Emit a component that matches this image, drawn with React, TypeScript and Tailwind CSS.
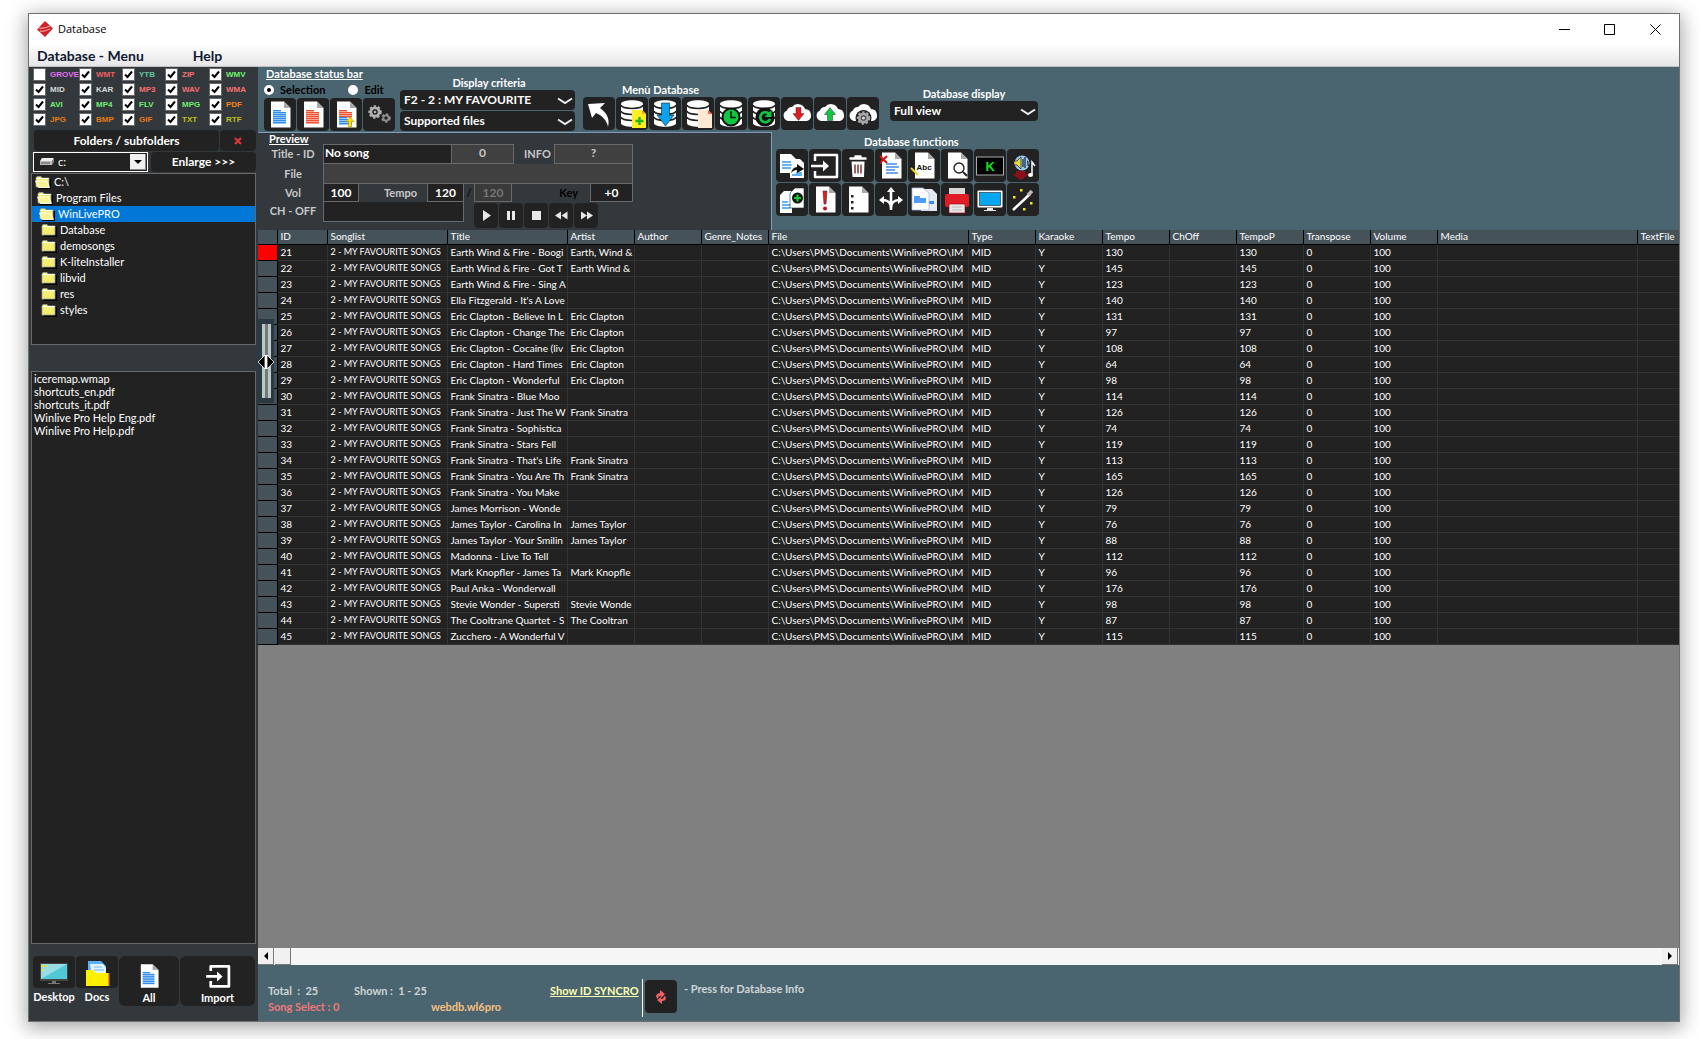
import { useState } from 'react';
import type { ReactNode } from 'react';

interface Filter {
    name: string;
    color: string;
    on?: boolean;
}

const filters: Filter[] = [
    { name: 'GROVE', color: 'text-[#e070f0]', on: false },
    { name: 'WMT', color: 'text-[#f06060]' },
    { name: 'YTB', color: 'text-[#60c8a0]' },
    { name: 'ZIP', color: 'text-[#f87070]' },
    { name: 'WMV', color: 'text-[#70f070]' },
    { name: 'MID', color: 'text-[#d8d8d8]' },
    { name: 'KAR', color: 'text-[#d8d8d8]' },
    { name: 'MP3', color: 'text-[#f87070]' },
    { name: 'WAV', color: 'text-[#f87070]' },
    { name: 'WMA', color: 'text-[#f87070]' },
    { name: 'AVI', color: 'text-[#70f070]' },
    { name: 'MP4', color: 'text-[#70f070]' },
    { name: 'FLV', color: 'text-[#70f070]' },
    { name: 'MPG', color: 'text-[#70f070]' },
    { name: 'PDF', color: 'text-[#ff8010]' },
    { name: 'JPG', color: 'text-[#e87c10]' },
    { name: 'BMP', color: 'text-[#e87c10]' },
    { name: 'GIF', color: 'text-[#e87c10]' },
    { name: 'TXT', color: 'text-[#c0c010]' },
    { name: 'RTF', color: 'text-[#c0c010]' },
];

const folders = [
    { name: 'C:\\', pad: 'pl-[3px]', open: true },
    { name: 'Program Files', pad: 'pl-[5px]', open: true },
    { name: 'WinLivePRO', pad: 'pl-[7px]', open: true },
    { name: 'Database', pad: 'pl-[9px]', open: false },
    { name: 'demosongs', pad: 'pl-[9px]', open: false },
    { name: 'K-liteInstaller', pad: 'pl-[9px]', open: false },
    { name: 'libvid', pad: 'pl-[9px]', open: false },
    { name: 'res', pad: 'pl-[9px]', open: false },
    { name: 'styles', pad: 'pl-[9px]', open: false },
];

const files = ['iceremap.wmap', 'shortcuts_en.pdf', 'shortcuts_it.pdf', 'Winlive Pro Help Eng.pdf', 'Winlive Pro Help.pdf'];

const columns = [
    { name: 'ID', width: 'w-[50px]' },
    { name: 'Songlist', width: 'w-[120px]' },
    { name: 'Title', width: 'w-[120px]' },
    { name: 'Artist', width: 'w-[67px]' },
    { name: 'Author', width: 'w-[67px]' },
    { name: 'Genre_Notes', width: 'w-[67px]' },
    { name: 'File', width: 'w-[200px]' },
    { name: 'Type', width: 'w-[67px]' },
    { name: 'Karaoke', width: 'w-[67px]' },
    { name: 'Tempo', width: 'w-[67px]' },
    { name: 'ChOff', width: 'w-[67px]' },
    { name: 'TempoP', width: 'w-[67px]' },
    { name: 'Transpose', width: 'w-[67px]' },
    { name: 'Volume', width: 'w-[67px]' },
    { name: 'Media', width: 'w-[200px]' },
    { name: 'TextFile', width: '' },
];

// title, artist, tempo
const songs: [string, string, number][] = [
    ['Earth Wind & Fire - Boogi', 'Earth, Wind &', 130],
    ['Earth Wind & Fire - Got T', 'Earth Wind &', 145],
    ['Earth Wind & Fire - Sing A', '', 123],
    ["Ella Fitzgerald - It's A Love", '', 140],
    ['Eric Clapton - Believe In L', 'Eric Clapton', 131],
    ['Eric Clapton - Change The', 'Eric Clapton', 97],
    ['Eric Clapton - Cocaine (liv', 'Eric Clapton', 108],
    ['Eric Clapton - Hard Times', 'Eric Clapton', 64],
    ['Eric Clapton - Wonderful', 'Eric Clapton', 98],
    ['Frank Sinatra - Blue Moo', '', 114],
    ['Frank Sinatra - Just The W', 'Frank Sinatra', 126],
    ['Frank Sinatra - Sophistica', '', 74],
    ['Frank Sinatra - Stars Fell', '', 119],
    ["Frank Sinatra - That's Life", 'Frank Sinatra', 113],
    ['Frank Sinatra - You Are Th', 'Frank Sinatra', 165],
    ['Frank Sinatra - You Make', '', 126],
    ['James Morrison - Wonde', '', 79],
    ['James Taylor - Carolina In', 'James Taylor', 76],
    ['James Taylor - Your Smilin', 'James Taylor', 88],
    ['Madonna - Live To Tell', '', 112],
    ['Mark Knopfler - James Ta', 'Mark Knopfle', 96],
    ['Paul Anka - Wonderwall', '', 176],
    ['Stevie Wonder - Supersti', 'Stevie Wonde', 98],
    ['The Cooltrane Quartet - S', 'The Cooltran', 87],
    ['Zucchero - A Wonderful V', '', 115],
];

const rows = songs.map(([title, artist, tempo], i) => [
    String(21 + i), '2 - MY FAVOURITE SONGS', title, artist, '', '',
    'C:\\Users\\PMS\\Documents\\WinlivePRO\\IM', 'MID', 'Y', String(tempo), '', String(tempo), '0', '100', '', '',
]);

/* ---------- icon parts ---------- */

function Svg({ children }: { children: ReactNode }) {
    return <svg viewBox="0 0 32 33" className="h-full w-full" aria-hidden="true">{children}</svg>;
}

function Page({ fold = '#a8a8a8' }: { fold?: string }) {
    return (
        <>
            <path d="M7 3.5h13l6.5 6.5v19.500H7z" fill="#fff" />
            <path d="M20 3.500l6.500 6.500H20z" fill={fold} />
        </>
    );
}

function Lines({ color, from = 12, to = 24 }: { color: string; from?: number; to?: number }) {
    const ys = [];
    for (let y = from; y <= to; y += 2) ys.push(y);
    return (
        <>
            {ys.map((y, i) => (
                <rect key={y} x="9" y={y} width={i === 0 ? 8 : 13} height="1.500" fill={color} />
            ))}
        </>
    );
}

function Cylinder() {
    return (
        <>
            <path d="M5 7c0-5 22-5 22 0v19c0 5-22 5-22 0z" fill="#fff" />
            <path d="M5 8c1 4.500 21 4.500 22 0M5 14c1 4.500 21 4.500 22 0M5 20c1 4.500 21 4.500 22 0" fill="none" stroke="#222" strokeWidth="1.500" />
        </>
    );
}

function Cloud() {
    return <path d="M7 24a5.500 5.500 0 0 1-1-10.500 5 5 0 0 1 5-3.500 7.500 7.500 0 0 1 13 2 6.200 6.200 0 0 1 2 12z" fill="#fff" />;
}

function Gear({ cx, cy, r, fill, hole }: { cx: number; cy: number; r: number; fill: string; hole: string }) {
    return (
        <>
            <circle cx={cx} cy={cy} r={r} fill={fill} />
            <circle cx={cx} cy={cy} r={r} fill="none" stroke={fill} strokeWidth="2.500" strokeDasharray="2.200 1.800" />
            <circle cx={cx} cy={cy} r={r * 0.5} fill={hole} />
        </>
    );
}

const GearsIcon = () => (
    <Svg>
        <Gear cx={12} cy={14} r={5.5} fill="#b0b0b0" hole="#222" />
        <circle cx="12" cy="14" r="1.300" fill="#b0b0b0" />
        <Gear cx={23} cy={20} r={3.5} fill="#909090" hole="#222" />
    </Svg>
);

const statusIcons: { label: string; icon: ReactNode }[] = [
    { label: 'Song list', icon: <Svg><Page /><Lines color="#2f8cf0" /></Svg> },
    { label: 'Files', icon: <Svg><Page /><Lines color="#f05030" /></Svg> },
    {
        label: 'Move up',
        icon: (
            <Svg>
                <Page /><Lines color="#f05030" to={18} /><Lines color="#2f8cf0" from={19} to={25} />
                <path d="M20 19l4 4.500h-2.500V29h-3v-5.500H16z" fill="#ffe000" stroke="#a08000" strokeWidth=".5" />
            </Svg>
        ),
    },
    { label: 'Settings', icon: <GearsIcon /> },
];

const menuIcons: { label: string; icon: ReactNode }[] = [
    { label: 'Back', icon: <Svg><path d="M5 7l17-1-5 5c7 5 10 11 8 19-1-6-5-11-12-14l-4 5z" fill="#fff" /></Svg> },
    {
        label: 'New database',
        icon: (
            <Svg>
                <Cylinder /><path d="M16 13h10l4 4v14H16z" fill="#ffee22" /><path d="M26 13l4 4h-4z" fill="#f0b020" />
                <path d="M19.500 24h8M23.500 20v8" stroke="#22b822" strokeWidth="2.500" />
            </Svg>
        ),
    },
    { label: 'Load database', icon: <Svg><Cylinder /><path d="M12.500 6h8v12h4.500L16.500 29 8 18h4.500z" fill="#0aa2f2" stroke="#222" strokeWidth=".6" /></Svg> },
    { label: 'Copy database', icon: <Svg><Cylinder /><path d="M16 13h10l4 4v14H16z" fill="#ffe8d4" /><path d="M26 13l4 4h-4z" fill="#ff6050" /></Svg> },
    {
        label: 'Database history',
        icon: <Svg><Cylinder /><circle cx="16" cy="20" r="8.500" fill="#10c840" stroke="#111" strokeWidth="2" /><path d="M16 14v6.500h5" fill="none" stroke="#111" strokeWidth="1.600" /></Svg>,
    },
    {
        label: 'Restore database',
        icon: <Svg><Cylinder /><circle cx="17" cy="20" r="9.500" fill="#111" /><path d="M21.500 17.500a5 5 0 1 0 .5 4.500" fill="none" stroke="#10c840" strokeWidth="2.600" /><path d="M23.500 13v7h-7z" fill="#10c840" /></Svg>,
    },
    { label: 'Cloud download', icon: <Svg><Cloud /><path d="M15 10.500h5v6h3l-5.500 7-5.500-7h3z" fill="#e01c24" stroke="#333" strokeWidth=".5" /></Svg> },
    { label: 'Cloud upload', icon: <Svg><Cloud /><path d="M13.500 23.500h5v-6h3L16 10.500l-5.500 7h3z" fill="#10c840" stroke="#333" strokeWidth=".5" /></Svg> },
    { label: 'Cloud settings', icon: <Svg><Cloud /><circle cx="16.500" cy="21" r="8" fill="#222" /><Gear cx={16.5} cy={21} r={5.5} fill="#a8a8a8" hole="#444" /><circle cx="16.500" cy="21" r="1.600" fill="#ddd" /></Svg> },
];

const functionIcons: { label: string; icon: ReactNode }[] = [
    {
        label: 'Copy to',
        icon: (
            <Svg>
                <path d="M4 5h11l5 5v14H4z" fill="#fff" /><path d="M6 13h9M6 16h11M6 19h11" stroke="#2f9cf0" strokeWidth="1.300" />
                <path d="M17 10h7l4 4v15H14v-6z" fill="#fff" /><path d="M20 24h6M16 26h10" stroke="#2f9cf0" strokeWidth="1.300" />
                <path d="M15 24c1-4 3-6 6-6v-3l7 5-7 4v-3c-3 0-4 1-6 3z" fill="#111" />
            </Svg>
        ),
    },
    { label: 'Import song', icon: <Svg><path d="M6 12V6h22v22H6v-6M2 17h15" fill="none" stroke="#fff" strokeWidth="2.500" strokeLinejoin="round" /><path d="M14 11.500l6 5.500-6 5.500z" fill="#fff" /></Svg> },
    {
        label: 'Delete',
        icon: (
            <Svg>
                <path d="M8.500 9.500h15M13.500 7.500h5" stroke="#fff" strokeWidth="2.500" strokeLinecap="round" /><path d="M9.500 12.500h13L22 28H10.500z" fill="#fff" />
                <path d="M13 15.500v9M16 15.500v9M19 15.500v9" stroke="#600" strokeWidth="1.200" />
            </Svg>
        ),
    },
    { label: 'Remove from list', icon: <Svg><Page /><path d="M11 15h11M11 18h13M11 21h9M11 24h12" stroke="#3f8cf0" strokeWidth="1.300" /><path d="M5 7l7 7M12 7l-7 7" stroke="#e01010" strokeWidth="2" /></Svg> },
    {
        label: 'Rename',
        icon: (
            <Svg>
                <Page /><text x="8.500" y="21" fontSize="8" fontWeight="700" fontFamily="Liberation Sans, sans-serif" fill="#111">Abc</text>
                <path d="M3 19l7 7" stroke="#e8d820" strokeWidth="2" />
            </Svg>
        ),
    },
    { label: 'Search', icon: <Svg><Page /><circle cx="18" cy="19" r="5" fill="#fff" stroke="#222" strokeWidth="1.400" /><path d="M22 23l4 4" stroke="#222" strokeWidth="2" /></Svg> },
    {
        label: 'Karaoke',
        icon: (
            <Svg>
                <rect x="2.500" y="8" width="27" height="18" fill="#000" stroke="#aaa" />
                <text x="11.500" y="22" fontSize="13" fontWeight="700" fontFamily="Liberation Sans, sans-serif" fill="#10e020">K</text>
            </Svg>
        ),
    },
    {
        label: 'Audio',
        icon: (
            <Svg>
                <path d="M9 22h9v3h4l-8 6-9-6h4z" fill="#8c1018" /><circle cx="15" cy="14" r="7.500" fill="#9cc8f0" />
                <path d="M7 12h3l4-4v12l-4-4H7z" fill="#e8d840" stroke="#222" strokeWidth=".7" /><path d="M16 10v8M18 8v11M20 12c2 0 0 6 2 4" stroke="#123" fill="none" strokeWidth="1.200" />
                <path d="M25 26V13l3 4" stroke="#fff" fill="none" strokeWidth="1.500" /><ellipse cx="23.500" cy="26" rx="2.500" ry="2" fill="#fff" />
            </Svg>
        ),
    },
    {
        label: 'Add copy',
        icon: (
            <Svg>
                <path d="M4 12l4-4h8v22H4z" fill="#fff" /><path d="M6 19h6M6 22h8M6 25h8" stroke="#2f9cf0" strokeWidth="1.300" />
                <path d="M14 10l5-5h9v20H14z" fill="#fff" stroke="#222" strokeWidth=".6" /><circle cx="21.500" cy="15" r="5.500" fill="#111" />
                <path d="M18 15h7M21.500 11.500v7" stroke="#10d030" strokeWidth="2.200" />
            </Svg>
        ),
    },
    { label: 'Warnings', icon: <Svg><Page /><path d="M14 8h4l-1 13h-2z" fill="#e01c24" stroke="#333" strokeWidth=".6" /><circle cx="16" cy="25.500" r="2" fill="#c01018" /></Svg> },
    { label: 'Options', icon: <Svg><Page /><path d="M9 12h2.500v2.500H9zM9 18h2.500v2.500H9zM9 24h2.500v2.500H9z" fill="#222" /></Svg> },
    {
        label: 'Distribute',
        icon: (
            <Svg>
                <path d="M16 27V9M16 25c0-5-3-8-8-8M16 25c0-5 3-8 8-8" fill="none" stroke="#fff" strokeWidth="2.600" />
                <path d="M12 9l4-5 4 5zM9 13v8l-5-4zM23 13v8l5-4z" fill="#fff" />
            </Svg>
        ),
    },
    {
        label: 'Duplicate',
        icon: (
            <Svg>
                <path d="M13 6h11l5 5v17H13z" fill="#e4eaf4" /><path d="M21 18h5v3h-5z" fill="#2f8cf0" />
                <path d="M4 5h11l6 5v17H4z" fill="#fff" stroke="#aabbdd" strokeWidth=".8" /><path d="M6 13h6v2h6v5H6z" fill="#4f9cf8" />
            </Svg>
        ),
    },
    {
        label: 'Print',
        icon: (
            <Svg>
                <rect x="8" y="5" width="16" height="8" fill="#d8d8d8" /><rect x="4" y="11" width="24" height="13" rx="2" fill="#e01c24" />
                <rect x="8" y="21" width="16" height="9" fill="#e8e8e8" stroke="#a01018" strokeWidth=".7" /><path d="M11 24h10M11 27h10" stroke="#bbb" />
            </Svg>
        ),
    },
    { label: 'Monitor', icon: <Svg><rect x="3.500" y="7.500" width="25" height="17" rx="1" fill="#fff" /><rect x="5.500" y="9.500" width="21" height="13" fill="#06a6f0" stroke="#222" strokeWidth=".6" /><path d="M13 25h6v2h3v1H10v-1h3z" fill="#e8e8e8" /></Svg> },
    {
        label: 'Wizard',
        icon: <Svg><path d="M6 27L23 11" stroke="#fff" strokeWidth="2.600" /><path d="M21 12l4-4" stroke="#bbb" strokeWidth="3.500" /><path d="M13 6h2.500v2.500H13zM6 13h2.500v2.500H6zM23 19h2.500v2.500H23zM16 25h2.500v2.500H16z" fill="#f0e820" /></Svg>,
    },
];

const playerIcons = [
    { label: 'Play', d: 'M9 7l8 5.500L9 18z' },
    { label: 'Pause', d: 'M8 8h3v9H8zM13 8h3v9h-3z' },
    { label: 'Stop', d: 'M8 8h9v9H8z' },
    { label: 'Rewind', d: 'M12 8.500v8L6 12.500zM18.500 8.500v8l-6-4z' },
    { label: 'Forward', d: 'M7 8.500v8l6-4zM13 8.500v8l6-4z' },
];

function FolderIcon({ open }: { open: boolean }) {
    return (
        <svg viewBox="0 0 17 14" className="h-[14px] w-[17px] shrink-0" aria-hidden="true">
            <path d="M3 4h13v10H3z" fill="#000" />
            <path d="M1 3l1-1.500h4L7 3h7v9H1z" fill="#f4ee70" stroke="#999" strokeWidth=".8" />
            <path d="M1.500 3.500h12" stroke="#fff" />
            {open && <path d="M.5 6h11l3 6.500h-11z" fill="#f8f290" stroke="#fff" strokeWidth=".9" />}
        </svg>
    );
}

/* ---------- controls ---------- */

function IconButton({ label, children }: { label: string; children: ReactNode }) {
    return (
        <button aria-label={label} className="h-[33px] w-8 shrink-0 rounded bg-[#222]">
            {children}
        </button>
    );
}

function Dropdown({ label, options }: { label: string; options: string[] }) {
    return (
        <div className="relative">
            <select aria-label={label} className="block h-5 w-full appearance-none rounded bg-[#222] pl-1 text-[12px] leading-5 font-bold text-white">
                {options.map(o => <option key={o}>{o}</option>)}
            </select>
            <svg viewBox="0 0 16 8" className="pointer-events-none absolute top-[7px] right-[2px] h-2 w-4" aria-hidden="true">
                <path d="M1 1.500l7 4.500 7-4.500" fill="none" stroke="#e8eef4" strokeWidth="2" />
            </svg>
        </div>
    );
}

function FilterBox({ filter }: { filter: Filter }) {
    const [on, setOn] = useState(filter.on !== false);
    return (
        <label className="flex h-[15px] items-center gap-1">
            <span className="grid size-[13px] shrink-0">
                <input
                    type="checkbox"
                    checked={on}
                    onChange={e => setOn(e.target.checked)}
                    className="col-start-1 row-start-1 size-[13px] appearance-none border border-[#696969] bg-white"
                />
                {on && (
                    <svg viewBox="0 0 13 13" className="pointer-events-none col-start-1 row-start-1 size-[13px]" aria-hidden="true">
                        <path d="M3 6.500l2.500 2.500L10 3.500" fill="none" stroke="#000" strokeWidth="2" />
                    </svg>
                )}
            </span>
            <span className={`font-['Liberation_Sans',sans-serif] text-[8px] leading-3 font-bold ${filter.color}`}>{filter.name}</span>
        </label>
    );
}

function Sidebar() {
    const [current, setCurrent] = useState('WinLivePRO');
    return (
        <aside className="flex w-[229px] shrink-0 flex-col bg-[#33383d] pl-[2px]">
            <div className="grid grid-cols-[46px_43px_43px_44px_44px] pl-[2px]">
                {filters.map(f => <FilterBox key={f.name} filter={f} />)}
            </div>

            <div className="mt-[3px] flex gap-px pl-[3px] text-[12px] font-bold text-white">
                <button className="h-[21px] w-[185px] rounded bg-[#222]">Folders / subfolders</button>
                <button aria-label="Close folders" className="grid h-[21px] w-9 place-items-center rounded bg-[#222]">
                    <svg viewBox="0 0 8 8" className="size-2" aria-hidden="true"><path d="M1 1l6 6M7 1L1 7" stroke="#d83838" strokeWidth="2.200" /></svg>
                </button>
            </div>
            <div className="mt-px flex gap-[3px] pl-[2px]">
                <div className="relative h-5 w-[115px] border border-white bg-[#222]">
                    <select aria-label="Drive" className="block h-[18px] w-full appearance-none bg-[#222] pl-6 text-[11px] leading-[18px] text-white">
                        <option>c:</option>
                    </select>
                    <svg viewBox="0 0 16 10" className="pointer-events-none absolute top-[4px] left-[5px] h-[10px] w-4" aria-hidden="true">
                        <path d="M3 1h12l-2 3H1z" fill="#eee" /><path d="M1 4h12v4H1z" fill="#bbb" /><path d="M13 4l2-3v4l-2 3z" fill="#888" /><path d="M2 6h9" stroke="#555" />
                    </svg>
                    <span className="pointer-events-none absolute top-px right-px grid h-4 w-4 place-items-center border-r border-b border-[#888] bg-[#f0f0f0]">
                        <svg viewBox="0 0 8 4" className="h-1 w-2" aria-hidden="true"><path d="M0 0h8L4 4z" /></svg>
                    </span>
                </div>
                <button className="h-5 w-[105px] rounded bg-[#222] text-[12px] leading-5 font-bold text-white">Enlarge &gt;&gt;&gt;</button>
            </div>

            <ul className="mt-px h-[172px] w-[225px] border border-[#696969] bg-[#222] text-[11px] text-white">
                {folders.map(f => (
                    <li key={f.name}>
                        <button
                            onClick={() => setCurrent(f.name)}
                            className={`flex h-4 w-full items-center gap-[2px] text-left leading-4 ${f.pad} ${current === f.name ? 'bg-[#0078d7]' : ''}`}
                        >
                            <FolderIcon open={f.open} />
                            {f.name}
                        </button>
                    </li>
                ))}
            </ul>

            <ul className="mt-[26px] w-[225px] flex-1 border border-[#696969] bg-[#222] pl-[2px] text-[11px] leading-[13px] text-white">
                {files.map(f => <li key={f}>{f}</li>)}
            </ul>

            <div className="flex h-[77px] gap-px pt-3 pl-[2px] text-[11px] leading-[18px] font-bold text-white">
                <button className="flex w-[42px] flex-col items-center">
                    <span className="block h-8 w-full rounded bg-[#222]">
                        <svg viewBox="0 0 42 32" className="h-full w-full" aria-hidden="true">
                            <rect x="7" y="7" width="28" height="18" fill="#444" />
                            <path d="M8 8h26v15H8z" fill="#50c8d8" /><path d="M8 8h26L8 23z" fill="#98dce4" /><path d="M9 9h2v2H9zM12 9h2v2h-2zM9 13h2v2H9z" fill="#f0e020" />
                            <path d="M19 25h4v2h4v1H15v-1h4z" fill="#777" />
                        </svg>
                    </span>
                    Desktop
                </button>
                <button className="flex w-[42px] flex-col items-center">
                    <span className="block h-8 w-full rounded bg-[#222]">
                        <svg viewBox="0 0 42 32" className="h-full w-full" aria-hidden="true">
                            <path d="M12 5h13l5 5v10H12z" fill="#58b0f8" /><path d="M14 8h13l3 4v8H16z" fill="#e4f2fc" /><path d="M18 11h8M18 14h10" stroke="#68b8f0" />
                            <path d="M10 14h7l3 3h13v13H10z" fill="#fff000" /><path d="M32 17h1.500v13H32z" fill="#f09010" />
                        </svg>
                    </span>
                    Docs
                </button>
                <button className="flex h-[50px] w-[60px] flex-col items-center rounded-md bg-[#222] pt-[5px]">
                    <span className="h-[30px] w-8"><Svg><Page /><Lines color="#2f8cf0" /></Svg></span>
                    <span className="leading-[14px]">All</span>
                </button>
                <button className="flex h-[50px] w-[75px] flex-col items-center rounded-md bg-[#222] pt-[5px]">
                    <span className="h-[30px] w-8"><Svg><path d="M8 11V6h20v22H8v-6M3 17h15" fill="none" stroke="#fff" strokeWidth="3" strokeLinejoin="round" /><path d="M15 11.500l6 5.500-6 5.500z" fill="#fff" /></Svg></span>
                    <span className="leading-[14px]">Import</span>
                </button>
            </div>
        </aside>
    );
}

function Toolbar() {
    return (
        <div className="flex h-[65px] shrink-0 pl-[6px] text-[11px] leading-[15px] font-bold text-white">
            <div className="w-[131px]">
                <h2 className="pl-[2px] leading-[14px] underline">Database status bar</h2>
                <div className="flex h-[17px] items-center leading-[13px] text-black">
                    <label className="flex items-center gap-[6px]">
                        <input type="radio" name="mode" defaultChecked className="size-[10px] appearance-none rounded-full border-[3px] border-white bg-white checked:bg-black" />
                        Selection
                    </label>
                    <label className="ml-[23px] flex items-center gap-[6px]">
                        <input type="radio" name="mode" className="size-[10px] appearance-none rounded-full border-[3px] border-white bg-white checked:bg-black" />
                        Edit
                    </label>
                </div>
                <div className="flex gap-px">
                    {statusIcons.map(b => <IconButton key={b.label} label={b.label}>{b.icon}</IconButton>)}
                </div>
            </div>
            <div className="ml-[5px] w-[175px] pt-2">
                <h2 className="pl-[3px] text-center">Display criteria</h2>
                <div className="flex flex-col gap-px">
                    <Dropdown label="Song list" options={['F2 - 2 : MY FAVOURITE']} />
                    <Dropdown label="File types" options={['Supported files']} />
                </div>
            </div>
            <div className="ml-2 pt-[15px]">
                <h2 className="pl-[39px]">Menù Database</h2>
                <div className="flex gap-px">
                    {menuIcons.map(b => <IconButton key={b.label} label={b.label}>{b.icon}</IconButton>)}
                </div>
            </div>
            <div className="ml-[11px] w-[148px] pt-[19px]">
                <h2 className="text-center">Database display</h2>
                <Dropdown label="Database display" options={['Full view']} />
            </div>
        </div>
    );
}

function Preview() {
    return (
        <section className="h-[98px] w-[514px] shrink-0 border-t border-r border-[#7f9bb5] bg-[#33383d] pl-[5px] text-[12px] font-bold text-[#c8c8c8]">
            <h2 className="pl-[6px] text-[11px] leading-[11px] text-white underline">Preview</h2>
            <div className="flex h-5 items-center">
                <label htmlFor="song" className="w-[60px] text-center text-[11px]">Title - ID</label>
                <input id="song" defaultValue="No song" className="h-5 w-[129px] border border-[#696969] bg-[#222] pb-[3px] pl-px text-white" />
                <input aria-label="Song ID" defaultValue="0" className="h-5 w-[62px] border border-l-0 border-[#696969] bg-[#404040] pb-[3px] text-center" />
                <label htmlFor="info" className="w-10 pl-[10px] text-[11px]">INFO</label>
                <input id="info" defaultValue="?" className="h-5 w-[79px] border border-[#696969] bg-[#404040] pb-[3px] text-center" />
            </div>
            <div className="flex h-5 items-center">
                <label htmlFor="file" className="w-[60px] text-center text-[11px]">File</label>
                <input id="file" className="h-5 w-[310px] border border-t-0 border-[#696969] bg-[#404040]" />
            </div>
            <div className="flex h-[18px] items-center">
                <label htmlFor="vol" className="w-[60px] text-center text-[11px]">Vol</label>
                <input id="vol" defaultValue="100" className="h-[18px] w-9 border border-t-0 border-[#696969] bg-[#222] text-center text-white" />
                <label htmlFor="tempo" className="w-[68px] pr-[10px] text-right text-[11px]">Tempo</label>
                <input id="tempo" defaultValue="120" className="h-[18px] w-[37px] border border-t-0 border-[#696969] bg-[#222] text-center text-white" />
                <span className="w-[10px] text-center text-[#111]">/</span>
                <input aria-label="Original tempo" defaultValue="120" className="h-[18px] w-[38px] border border-t-0 border-[#696969] bg-[#3a3a3a] text-center text-[#777]" />
                <label htmlFor="key" className="w-[78px] pr-3 text-right text-[11px] text-black">Key</label>
                <input id="key" defaultValue="+0" className="h-[18px] w-[43px] border border-t-0 border-[#696969] bg-[#222] text-center text-white" />
            </div>
            <div className="flex h-5">
                <label htmlFor="choff" className="w-[60px] text-center text-[11px] leading-[18px]">CH - OFF</label>
                <input id="choff" className="h-5 w-[141px] border border-t-0 border-[#696969] bg-[#222]" />
                <div className="flex gap-px pt-px pl-[10px]">
                    {playerIcons.map(p => (
                        <button key={p.label} aria-label={p.label} className="h-[25px] w-6 rounded bg-[#222]">
                            <svg viewBox="0 0 24 25" className="h-full w-full" aria-hidden="true"><path d={p.d} fill="#e8e8e8" /></svg>
                        </button>
                    ))}
                </div>
            </div>
        </section>
    );
}

function SongTable() {
    return (
        <table className="w-full table-fixed border-collapse bg-[#222] text-[10px] text-white">
            <thead>
                <tr className="h-[14px] bg-[#45525a] text-left">
                    <th className="w-[19px] border-r border-b border-black p-0" aria-label="Row" />
                    {columns.map(c => (
                        <th key={c.name} className={`border-r border-b border-black p-0 font-normal last:border-r-0 ${c.width}`}>
                            <div className="h-[13px] overflow-hidden pl-[3px] leading-[12px] whitespace-nowrap">{c.name}</div>
                        </th>
                    ))}
                </tr>
            </thead>
            <tbody>
                {rows.map((row, i) => (
                    <tr key={row[0]} className="h-4">
                        <td className={`border-r border-b border-black p-0 ${i === 0 ? 'bg-[#f00]' : 'bg-[#45525a]'}`} />
                        {row.map((cell, j) => (
                            <td key={j} className={`border-r border-b border-[#333] p-0 last:border-r-0 ${j === 1 ? 'text-[9px]' : ''}`}>
                                <div className="h-[15px] overflow-hidden pl-[3px] leading-[14px] whitespace-nowrap">{cell}</div>
                            </td>
                        ))}
                    </tr>
                ))}
            </tbody>
        </table>
    );
}

function Splitter() {
    return (
        <div className="absolute top-[89px] left-0 flex h-[84px] w-4 items-center justify-center bg-[#2b3a42]">
            <div className="h-[74px] w-[9px] border-x-[3px] border-[#b8c8c8] bg-[#777]" />
            <svg viewBox="0 0 16 16" className="absolute top-[35px] left-0 size-4" aria-hidden="true">
                <path d="M7 1v14L0 8zM9 1v14l7-7z" fill="#000" stroke="#fff" strokeWidth=".8" />
                <path d="M8 1v14" stroke="#fff" strokeWidth="2" />
            </svg>
        </div>
    );
}

function ScrollBar() {
    return (
        <div className="flex h-[17px] shrink-0 gap-px bg-[#f6f6f6] pr-px">
            <button aria-label="Scroll left" className="grid w-4 place-items-center border-r border-b border-[#777] bg-[#f0f0f0]">
                <svg viewBox="0 0 4 8" className="h-2 w-1" aria-hidden="true"><path d="M4 0v8L0 4z" /></svg>
            </button>
            <div className="w-4 border-r border-b border-[#777] bg-[#f0f0f0]" />
            <button aria-label="Scroll right" className="ml-auto grid w-4 place-items-center border-r border-b border-[#777] bg-[#f0f0f0]">
                <svg viewBox="0 0 4 8" className="h-2 w-1" aria-hidden="true"><path d="M0 0v8l4-4z" /></svg>
            </button>
        </div>
    );
}

function StatusBar() {
    return (
        <footer className="flex h-14 shrink-0 pt-[14px] pl-[10px] text-[11px] leading-4 font-bold text-[#d0d4d8]">
            <div className="w-[282px] pt-1">
                <div className="flex whitespace-pre">
                    <span className="w-[86px]">Total  :  25</span>
                    <span>Shown :  1 - 25</span>
                </div>
                <div className="flex">
                    <span className="w-[163px] text-[#f07878]">Song Select : 0</span>
                    <span className="text-[#f8c080]">webdb.wl6pro</span>
                </div>
            </div>
            <div className="w-[92px] pt-1">
                <a href="#syncro" className="whitespace-nowrap text-[#ffffb0] underline">Show ID SYNCRO</a>
            </div>
            <div className="flex h-[38px] border-l border-white pt-px pl-[2px]">
                <button aria-label="Database info" className="grid h-[33px] w-8 place-items-center rounded bg-[#222]">
                    <svg viewBox="0 0 12 16" className="h-4 w-3" aria-hidden="true">
                        <path d="M1 8c0-3 2-4 4-4V1l5 4-4 4V7C4 7 3 8 3 10zM11 8c0 3-2 4-4 4v3l-5-4 4-3v2c2 0 3-1 3-3z" fill="#f06060" />
                    </svg>
                </button>
            </div>
            <span className="pt-[2px] pl-[7px]">- Press for Database Info</span>
        </footer>
    );
}

export default function App() {
    return (
        <div className="flex min-h-screen bg-white pt-[13px] pr-[19px] pb-[17px] pl-7 font-['Lato','Liberation_Sans',sans-serif]">
            <div className="flex min-w-0 flex-1 flex-col border border-[#707070] bg-white shadow-[0_4px_18px_2px_rgba(0,0,0,0.35)]">
                <header className="flex h-[30px] shrink-0 items-center pl-2">
                    <svg viewBox="0 0 16 16" className="size-4" aria-hidden="true">
                        <path d="M8 0l8 7.500L8 16 0 8.500z" fill="#d02028" /><path d="M2 7c4 1 8-1 11-2M3 10c4 1 7-1 10-2" stroke="#fbb" fill="none" />
                    </svg>
                    <h1 className="ml-[5px] font-['Open_Sans',sans-serif] text-[11px] text-black">Database</h1>
                    <div className="ml-auto flex">
                        <button aria-label="Minimize" className="grid h-[30px] w-[45px] place-items-center"><svg viewBox="0 0 11 11" className="size-[11px]"><path d="M0 5.500h11" stroke="#000" /></svg></button>
                        <button aria-label="Maximize" className="grid h-[30px] w-[45px] place-items-center"><svg viewBox="0 0 11 11" className="size-[11px]"><path d="M.5.5h10v10H.5z" fill="none" stroke="#000" /></svg></button>
                        <button aria-label="Close" className="grid h-[30px] w-[47px] place-items-center"><svg viewBox="0 0 11 11" className="size-[11px]"><path d="M.5.5l10 10M10.500.5l-10 10" stroke="#000" /></svg></button>
                    </div>
                </header>
                <nav className="flex h-[23px] shrink-0 gap-[49px] border-b border-[#c0c0c0] bg-linear-to-b from-white to-[#e6e6e8] pl-2 text-[14px] leading-[24px] font-bold text-[#101830]">
                    <button>Database - Menu</button>
                    <button>Help</button>
                </nav>

                <div className="flex min-h-0 flex-1">
                    <Sidebar />
                    <main className="flex min-w-0 flex-1 flex-col bg-[#4a6570]">
                        <Toolbar />
                        <div className="flex h-[98px] shrink-0">
                            <Preview />
                            <div className="pt-[3px] pl-1 text-[11px] leading-[14px] font-bold text-white">
                                <h2 className="pl-[88px]">Database functions</h2>
                                <div className="grid grid-cols-8 gap-px">
                                    {functionIcons.map(b => <IconButton key={b.label} label={b.label}>{b.icon}</IconButton>)}
                                </div>
                            </div>
                        </div>
                        <div className="relative flex-1 overflow-hidden bg-[#808080]">
                            <SongTable />
                            <Splitter />
                        </div>
                        <ScrollBar />
                        <StatusBar />
                    </main>
                </div>
            </div>
        </div>
    );
}
